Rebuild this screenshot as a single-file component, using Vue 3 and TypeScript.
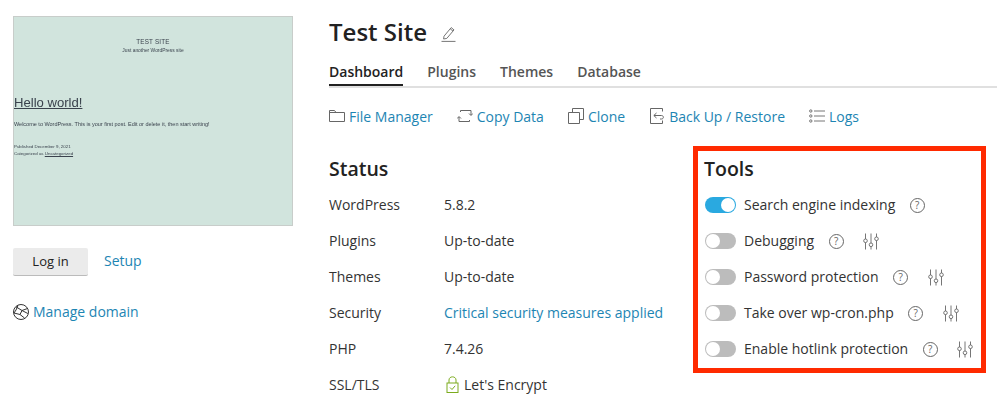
<script setup lang="ts">
const tabs = ['Dashboard', 'Plugins', 'Themes', 'Database']
const status = [
  { label: 'WordPress', value: '5.8.2' },
  { label: 'Plugins', value: 'Up-to-date' },
  { label: 'Themes', value: 'Up-to-date' },
  { label: 'Security', value: 'Critical security measures applied', link: true },
  { label: 'PHP', value: '7.4.26' },
  { label: 'SSL/TLS', value: "Let's Encrypt", lock: true }
]
const tools = [
  { label: 'Search engine indexing', on: true, tune: false },
  { label: 'Debugging', on: false, tune: true },
  { label: 'Password protection', on: false, tune: true },
  { label: 'Take over wp-cron.php', on: false, tune: true },
  { label: 'Enable hotlink protection', on: false, tune: true }
]
</script>

<template>
  <div class="page">
    <aside class="side">
      <div class="thumb">
        <div class="t-site">TEST SITE</div>
        <div class="t-tag">Just another WordPress site</div>
        <div class="t-hello">Hello world!</div>
        <div class="t-body">Welcome to WordPress. This is your first post. Edit or delete it, then start writing!</div>
        <div class="t-meta">Published December 9, 2021</div>
        <div class="t-meta">Categorized as <u>Uncategorized</u></div>
      </div>
      <div class="login-row">
        <button class="login">Log in</button>
        <a class="link">Setup</a>
      </div>
      <div class="domain">
        <svg width="16" height="16" viewBox="0 0 16 16" fill="none" stroke="#333" stroke-width="1">
          <circle cx="8" cy="8" r="7.5" />
          <path d="M3 2.8 L9 6.5 L14.5 4.5 M9 6.5 L7 10.5 L1 9 M7 10.5 L11.5 14 M9 6.5 L14.8 9.5 M5 1.5 L3 6 L1 9" />
        </svg>
        <a class="link">Manage domain</a>
      </div>
    </aside>

    <main class="main">
      <div class="title-row">
        <h1>Test Site</h1>
        <svg class="pencil" width="15" height="16" viewBox="0 0 15 16" fill="none" stroke="#666" stroke-width="0.9">
          <path d="M3 10.2 L10.2 1.6 L13 3.9 L5.8 12.4 L2.6 13 Z M9.2 2.8 L12 5.1 M0.5 15.4 H14.5" />
        </svg>
      </div>

      <nav class="tabs">
        <a v-for="(t, i) in tabs" :key="t" class="tab" :class="{ active: i === 0 }">{{ t }}</a>
      </nav>

      <div class="actions">
        <a class="action">
          <svg width="16" height="14" viewBox="0 0 16 14" fill="none" stroke="#666"><path d="M0.5 12.5 V1.5 H5.5 L7 3.5 H15.5 V12.5 Z M0.5 3.5 H7" /></svg>
          <span class="link">File Manager</span>
        </a>
        <a class="action">
          <svg width="16" height="14" viewBox="0 0 16 14" fill="none" stroke="#666"><path d="M3.5 3 V1.5 H14 V6 M12 4.5 L14 6.5 L15.8 4.5 M12.5 11 V12.5 H2 V8 M0.2 9.5 L2 7.5 L4 9.5" /></svg>
          <span class="link">Copy Data</span>
        </a>
        <a class="action">
          <svg width="16" height="16" viewBox="0 0 16 16" fill="none" stroke="#666"><path d="M0.5 4.5 H11.5 V15.5 H0.5 Z M4.5 4.5 V0.5 H15.5 V11.5 H11.5" /></svg>
          <span class="link">Clone</span>
        </a>
        <a class="action">
          <svg width="16" height="16" viewBox="0 0 16 16" fill="none" stroke="#666"><path d="M13.5 3.5 V0.5 H1.5 V15.5 H13.5 V12.5 M7.5 5 L4.8 7.5 L7.5 10 M5 7.5 H12.5 C15 7.5 15 11 12.5 11 H11" /></svg>
          <span class="link">Back Up / Restore</span>
        </a>
        <a class="action">
          <svg width="16" height="14" viewBox="0 0 16 14" fill="none" stroke="#666" stroke-width="0.9"><circle cx="1.8" cy="2" r="1.2" /><circle cx="1.8" cy="7" r="1.2" /><circle cx="1.8" cy="12" r="1.2" /><path d="M5 2 H16 M5 7 H16 M5 12 H16" /></svg>
          <span class="link">Logs</span>
        </a>
      </div>

      <div class="columns">
        <section class="status">
          <h2>Status</h2>
          <div v-for="r in status" :key="r.label" class="row">
            <span class="label">{{ r.label }}</span>
            <span class="value" :class="{ link: r.link }">
              <svg v-if="r.lock" class="lock" width="13" height="17" viewBox="0 0 13 17" fill="none" stroke="#7cab1e">
                <path d="M3 7 V4 C3 -0.2 10 -0.2 10 4 V7" />
                <rect x="1" y="7" width="11" height="9.5" />
                <path d="M4 11.5 L6 13.5 L9.2 9.8" />
              </svg>
              <span>{{ r.value }}</span>
            </span>
          </div>
        </section>

        <section class="tools">
          <h2>Tools</h2>
          <div v-for="t in tools" :key="t.label" class="tool">
            <span class="toggle" :class="{ on: t.on }"><span class="knob"></span></span>
            <span class="tool-label">{{ t.label }}</span>
            <span class="help">?</span>
            <svg v-if="t.tune" class="tune" width="16" height="17" viewBox="0 0 16 17" fill="none" stroke="#666" stroke-width="0.9">
              <path d="M2.5 0.5 V6 M2.5 9.5 V16.5 M8 0.5 V10 M8 13.5 V16.5 M13.5 0.5 V4 M13.5 7.5 V16.5" />
              <circle cx="2.5" cy="7.8" r="1.8" />
              <circle cx="8" cy="11.8" r="1.8" />
              <circle cx="13.5" cy="5.8" r="1.8" />
            </svg>
          </div>
        </section>
      </div>
    </main>
  </div>
</template>

<style scoped>
.page {
  display: flex;
  width: 997px;
  height: 411px;
  overflow: hidden;
  background: #fff;
  font-family: "Open Sans", sans-serif;
  font-size: 14px;
  color: #333;
  box-sizing: border-box;
  padding: 16px 0 0 13px;
}
.side {
  width: 280px;
  flex: none;
  margin-right: 36px;
}
.thumb {
  box-sizing: border-box;
  height: 210px;
  background: #d1e4dd;
  border: 1px solid #c8cdca;
  font-family: "Liberation Sans", sans-serif;
  color: #3a424d;
  overflow: hidden;
}
.t-site {
  margin-top: 20px;
  text-align: center;
  font-size: 6.3px;
  line-height: 9px;
  letter-spacing: 0.2px;
  filter: blur(0.3px);
}
.t-tag {
  text-align: center;
  font-size: 4.9px;
  line-height: 9px;
  filter: blur(0.5px);
}
.t-hello {
  margin-top: 39px;
  font-size: 13.1px;
  line-height: 18px;
  text-decoration: underline;
  text-decoration-thickness: 1px;
  filter: blur(0.3px);
}
.t-body {
  margin-top: 8px;
  font-size: 5.5px;
  line-height: 8px;
  filter: blur(0.5px);
}
.t-meta {
  font-size: 4.4px;
  line-height: 7px;
  filter: blur(0.5px);
}
.t-body + .t-meta {
  margin-top: 15px;
}
.login-row {
  display: flex;
  align-items: center;
  margin-top: 22px;
}
.login {
  width: 75px;
  height: 28px;
  padding: 0 0 2px;
  border: 0;
  border-radius: 2px;
  border-bottom: 1px solid #bbb;
  background: #ebebeb;
  color: #222;
  font: 500 13px "Open Sans", sans-serif;
}
.login-row .link {
  margin-left: 16px;
  margin-top: -4px;
}
.link {
  color: #1d85b3;
}
.domain {
  display: flex;
  align-items: center;
  gap: 4px;
  margin-top: 24px;
  line-height: 24px;
}
.main {
  width: 668px;
  flex: none;
}
.title-row {
  display: flex;
  align-items: center;
  height: 34px;
  margin-top: -1px;
}
h1 {
  margin: 0;
  font-size: 24px;
  font-weight: 600;
  color: #222;
  line-height: 34px;
}
.pencil {
  margin-left: 14px;
  margin-top: 3px;
}
.tabs {
  display: flex;
  gap: 24px;
  margin-top: 11px;
  border-bottom: 2px solid #e0e0e0;
  height: 26px;
}
.tab {
  font-weight: 600;
  color: #555;
  line-height: 24px;
  height: 26px;
  box-sizing: border-box;
}
.tab.active {
  color: #222;
  border-bottom: 2px solid #222;
}
.actions {
  display: flex;
  gap: 24px;
  margin-top: 16px;
  height: 24px;
}
.action {
  display: flex;
  align-items: center;
  gap: 4px;
}
.columns {
  display: flex;
  margin-top: 19px;
}
.status {
  width: 364px;
  flex: none;
  padding-top: 7px;
}
h2 {
  margin: 0;
  font-size: 19.5px;
  font-weight: 600;
  color: #222;
  line-height: 30px;
}
.row {
  display: flex;
  align-items: center;
  height: 36px;
}
.status h2 {
  margin-bottom: 2px;
}
.label {
  width: 115px;
  flex: none;
}
.value {
  display: flex;
  align-items: center;
  gap: 5px;
  white-space: nowrap;
}
.lock {
  flex: none;
  margin-left: 2px;
  margin-top: 1px;
}
.tools {
  box-sizing: border-box;
  width: 293px;
  height: 227px;
  border: 5px solid #ff2a00;
  padding: 3px 0 0 6px;
  margin-top: -1px;
}
.tools h2 {
  margin-bottom: 3px;
}
.tool {
  display: flex;
  align-items: center;
  height: 36px;
}
.toggle {
  box-sizing: border-box;
  display: flex;
  align-items: center;
  width: 31px;
  height: 16px;
  border-radius: 8px;
  background: #bcbcbc;
  flex: none;
  margin-left: 1px;
}
.knob {
  width: 14px;
  height: 14px;
  margin-left: 1px;
  border-radius: 50%;
  background: #fff;
}
.toggle.on {
  background: #2aa9e0;
  justify-content: flex-end;
}
.toggle.on .knob {
  margin-left: 0;
  margin-right: 1px;
}
.tool-label {
  margin-left: 8px;
  margin-top: -2px;
}
.help {
  box-sizing: border-box;
  width: 15px;
  height: 15px;
  margin-left: 14.5px;
  border: 1px solid #666;
  border-radius: 50%;
  font-size: 10px;
  line-height: 13px;
  text-align: center;
  color: #666;
  flex: none;
}
.tune {
  margin-left: 19.5px;
  flex: none;
}
</style>
